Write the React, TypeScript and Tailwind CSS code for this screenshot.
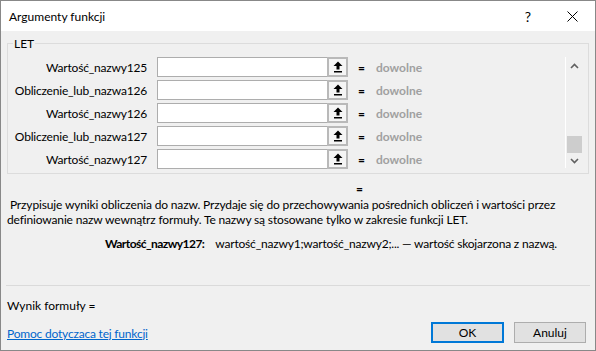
import React from 'react';

const rows = [
  'Wartość_nazwy125',
  'Obliczenie_lub_nazwa126',
  'Wartość_nazwy126',
  'Obliczenie_lub_nazwa127',
  'Wartość_nazwy127',
];

function CollapseIcon() {
  return (
    <svg width="10" height="12" viewBox="0 0 10 12">
      <path d="M5 0.5 L9.5 5 L6.5 5 L6.5 8.5 L3.5 8.5 L3.5 5 L0.5 5 Z" fill="#000" />
      <rect x="1" y="10" width="8" height="1.5" fill="#000" />
    </svg>
  );
}

function ArgRow({ label }: { label: string }) {
  return (
    <div className="flex items-center h-[20px]">
      <div className="w-[139px] text-right whitespace-nowrap tracking-[-0.2px]">{label}</div>
      <div className="ml-[10px] flex h-[20px] border border-[#adadad] bg-white">
        <div className="w-[169px]" />
        <div className="w-[21px] border-2 border-[#b9b9b9] bg-[#f5f5f5] flex items-center justify-center -my-px -mr-px h-[20px]">
          <CollapseIcon />
        </div>
      </div>
      <span className="ml-[10px] font-bold">=</span>
      <span className="ml-[11px] font-bold text-[#a0a0a0]">dowolne</span>
    </div>
  );
}

export default function App() {
  return (
    <div className="w-[596px] h-[351px] border border-[#888888] bg-[#f0f0f0] flex flex-col text-[12px] leading-[15px] text-black font-['Lato'] overflow-hidden">
      {/* Title bar */}
      <div className="h-[30px] bg-white flex items-center pl-[8px] shrink-0">
        <span className="flex-1">Argumenty funkcji</span>
        <span className="text-[14px] mr-[36px]">?</span>
        <svg width="11" height="11" viewBox="0 0 11 11" className="mr-[17px]">
          <path d="M0.5 0.5 L10.5 10.5 M10.5 0.5 L0.5 10.5" stroke="#000" strokeWidth="1" />
        </svg>
      </div>

      {/* Group box */}
      <fieldset className="mx-[6px] mt-[5px] border border-[#dcdcdc] pb-[4px]">
        <legend className="ml-[5px] px-px">LET</legend>
        <div className="flex pt-[6px]">
          <div className="flex flex-col gap-[3px]">
            {rows.map((r) => (
              <ArgRow key={r} label={r} />
            ))}
          </div>
          <div className="flex-1" />
          {/* Scrollbar */}
          <div className="w-[17px] h-[111px] mr-[6px] border-l border-white flex flex-col items-center">
            <svg width="9" height="6" viewBox="0 0 9 6" className="mt-[6px]">
              <path d="M1 5 L4.5 1.5 L8 5" stroke="#606060" strokeWidth="1.6" fill="none" />
            </svg>
            <div className="flex-1" />
            <div className="w-[15px] h-[17px] bg-[#cdcdcd]" />
            <svg width="9" height="6" viewBox="0 0 9 6" className="mt-[5px] mb-[4px]">
              <path d="M1 1 L4.5 4.5 L8 1" stroke="#606060" strokeWidth="1.6" fill="none" />
            </svg>
          </div>
        </div>
      </fieldset>

      {/* Result of function */}
      <div className="mt-[7px] ml-[355px] font-bold">=</div>

      {/* Description */}
      <div className="mt-[1px] px-[6px] whitespace-pre tracking-[-0.15px]">
        <div>{' Przypisuje wyniki obliczenia do nazw. Przydaje się do przechowywania pośrednich obliczeń i wartości przez'}</div>
        <div>definiowanie nazw wewnątrz formuły. Te nazwy są stosowane tylko w zakresie funkcji LET.</div>
      </div>
      <div className="mt-[9px] flex whitespace-nowrap">
        <span className="ml-[104px] font-bold tracking-[-0.55px]">Wartość_nazwy127:</span>
        <span className="ml-[11px] tracking-[-0.2px]">wartość_nazwy1;wartość_nazwy2;... — wartość skojarzona z nazwą.</span>
      </div>

      {/* Divider */}
      <div className="mt-[34px] mx-[5px] h-px bg-[#dadada]" />

      <div className="mt-[12px] ml-[6px]">Wynik formuły =</div>

      {/* Footer */}
      <div className="mt-[9px] flex items-center pl-[6px] pr-[9px]">
        <a href="#" className="flex-1 text-[#0066cc] underline mt-[1px] tracking-[-0.2px]">Pomoc dotyczaca tej funkcji</a>
        <button className="w-[73px] h-[21px] border-2 border-[#0078d7] bg-[#e1e1e1]">OK</button>
        <button className="ml-[10px] w-[72px] h-[21px] border border-[#adadad] bg-[#e1e1e1]">Anuluj</button>
      </div>
    </div>
  );
}
